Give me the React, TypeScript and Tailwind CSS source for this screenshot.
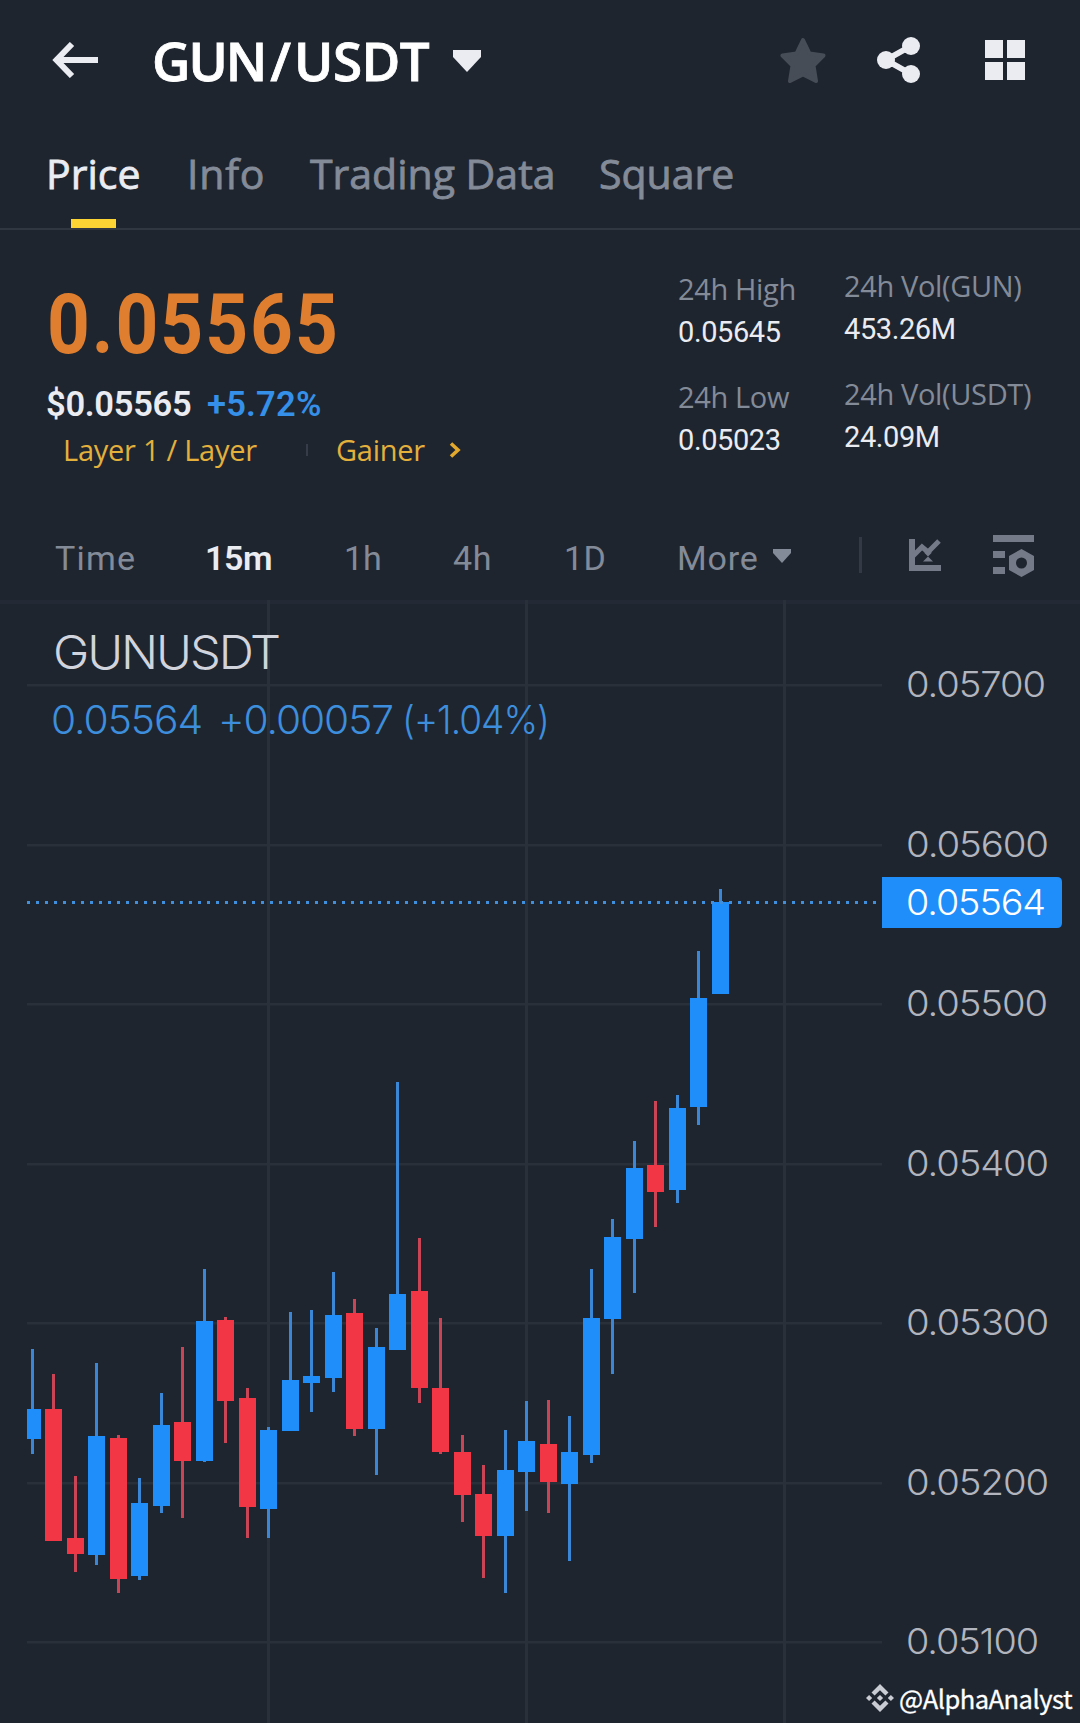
import React from 'react';

type Candle = {
  up: boolean;
  high: number;
  top: number;
  bottom: number;
  low: number;
};

const c = (up: boolean, high: number, top: number, bottom: number, low: number): Candle => ({
  up,
  high,
  top,
  bottom,
  low,
});

const CANDLES: Candle[] = [
  c(true, 1349, 1409, 1439, 1454),
  c(false, 1374, 1409, 1541, 1541),
  c(false, 1476, 1538, 1554, 1572),
  c(true, 1363, 1436, 1555, 1565),
  c(false, 1435, 1438, 1579, 1593),
  c(true, 1478, 1503, 1576, 1580),
  c(true, 1393, 1425, 1506, 1513),
  c(false, 1347, 1422, 1461, 1518),
  c(true, 1269, 1321, 1461, 1462),
  c(false, 1317, 1320, 1401, 1443),
  c(false, 1388, 1398, 1507, 1538),
  c(true, 1427, 1430, 1509, 1538),
  c(true, 1312, 1380, 1431, 1431),
  c(true, 1310, 1376, 1383, 1412),
  c(true, 1272, 1315, 1378, 1392),
  c(false, 1299, 1313, 1429, 1436),
  c(true, 1328, 1347, 1429, 1475),
  c(true, 1082, 1294, 1350, 1350),
  c(false, 1238, 1291, 1388, 1403),
  c(false, 1318, 1388, 1452, 1454),
  c(false, 1435, 1452, 1495, 1522),
  c(false, 1465, 1494, 1536, 1578),
  c(true, 1430, 1470, 1536, 1593),
  c(true, 1401, 1441, 1472, 1511),
  c(false, 1400, 1444, 1482, 1513),
  c(true, 1416, 1452, 1484, 1561),
  c(true, 1269, 1318, 1455, 1463),
  c(true, 1219, 1237, 1319, 1374),
  c(true, 1141, 1168, 1239, 1293),
  c(false, 1101, 1165, 1192, 1227),
  c(true, 1095, 1108, 1190, 1203),
  c(true, 951, 998, 1107, 1125),
  c(true, 889, 902, 994, 994),
];

const LEVELS = [
  { label: '0.05700', y: 684, width: 139 },
  { label: '0.05600', y: 844, width: 142 },
  { label: '0.05500', y: 1003, width: 141 },
  { label: '0.05400', y: 1163, width: 142 },
  { label: '0.05300', y: 1322, width: 142 },
  { label: '0.05200', y: 1482, width: 142 },
  { label: '0.05100', y: 1641, width: 132 },
];

const COLUMNS = [267, 525, 783];

const Header: React.FC = () => (
  <header className="flex h-[120px] items-center pl-[52px] pr-[55px]">
    <svg className="h-9 w-[47px]" viewBox="0 0 47 36" fill="none" stroke="#eaecf2" strokeWidth="6">
      <path d="M46 18H4M20 2L4.5 18L20 34" />
    </svg>
    <h1 className="ml-[53px] w-[301px] whitespace-nowrap font-['Open_Sans',sans-serif] text-[53px] font-semibold leading-none text-white [-webkit-text-stroke:0.8px]">
      <span className="tracking-[-2px]">GUN</span>
      <span className="ml-[5px] mr-[3px]">/</span>
      <span className="tracking-[-0.5px]">USDT</span>
    </h1>
    <svg className="mt-0.5 h-[22px] w-7" viewBox="0 0 28 22" fill="#eaecf2">
      <path d="M0 0H28V7L14 22L0 7Z" />
    </svg>
    <div className="ml-auto flex items-center">
      {/* favourite */}
      <svg className="h-[48px] w-[46px]" viewBox="0 0 46 48" fill="#474d57" stroke="#474d57" strokeWidth="4" strokeLinejoin="round">
        <path d="M23 4L29.5 17.5L43.5 19.5L33.5 29.5L36 45L23 38.5L10 45L12.5 29.5L2.5 19.5L16.5 17.5Z" />
      </svg>
      {/* share */}
      <svg className="ml-[51px] h-[46px] w-[43px]" viewBox="0 0 43 46" fill="#eaecf2">
        <path d="M34 9L9 23L34 37" fill="none" stroke="#eaecf2" strokeWidth="6" />
        <circle cx="34" cy="9" r="9" />
        <circle cx="9" cy="23" r="9" />
        <circle cx="34" cy="37" r="9" />
      </svg>
      {/* layout grid */}
      <div className="ml-[65px] grid h-10 w-10 grid-cols-2 gap-1">
        <span className="bg-[#eaecf2]" />
        <span className="bg-[#eaecf2]" />
        <span className="bg-[#eaecf2]" />
        <span className="bg-[#eaecf2]" />
      </div>
    </div>
  </header>
);

const Tabs: React.FC = () => (
  <nav className="grid h-[110px] grid-cols-[141px_122px_289px_1fr] border-b-2 border-[#303741] pl-[46px] pt-[26px] font-['Open_Sans',sans-serif] text-[41px] leading-[54px] text-[#848b98] [-webkit-text-stroke:0.8px]">
    <div className="text-[#eaecf2]">
      <div>Price</div>
      <div className="ml-[25px] mt-[19px] h-[9px] w-[45px] bg-[#fcd535]" />
    </div>
    <div className="tracking-[0.8px]">Info</div>
    <div className="pl-px">Trading Data</div>
    <div className="pl-px">Square</div>
  </nav>
);

const Stat: React.FC<{ label: string; value: string }> = ({ label, value }) => (
  <div className="whitespace-nowrap leading-9">
    <div className="font-['Open_Sans',sans-serif] text-[29px] tracking-[-0.35px] text-[#848b98]">{label}</div>
    <div className="mt-[7px] font-[Roboto,sans-serif] text-[29px] tracking-[-0.4px] text-[#eaecf2]">{value}</div>
  </div>
);

const Ticker: React.FC = () => (
  <section className="flex h-[286px]">
    <div className="w-[678px] pt-[54px]">
      <div className="ml-[47px] origin-left scale-x-[0.89] font-[Roboto,sans-serif] text-[84px] font-bold leading-[82px] tracking-[2.2px] text-[#de7e2e]">
        0.05565
      </div>
      <div className="mt-[18px] flex pl-[46px] font-[Roboto,sans-serif] text-[34.5px] font-semibold leading-10">
        <span className="w-[161px] tracking-[-0.3px] text-[#eaecf2]">$0.05565</span>
        <span className="tracking-[0.2px] text-[#3490e8]">+5.72%</span>
      </div>
      <div className="mt-1.5 flex items-center pl-[63px] font-['Open_Sans',sans-serif] text-[29px] leading-10 tracking-[-0.25px] text-[#e3b03c]">
        <span className="w-[243px]">Layer 1 / Layer</span>
        <span className="h-3 w-0.5 bg-[#363d49]" />
        <span className="ml-[28px] w-[113px]">Gainer</span>
        <svg className="h-4 w-3" viewBox="0 0 12 16" fill="none" stroke="#e3a92c" strokeWidth="3.6">
          <path d="M2 1.5L9 8L2 14.5" />
        </svg>
      </div>
    </div>
    <div className="w-[166px] space-y-[29px] pt-[41px]">
      <Stat label="24h High" value="0.05645" />
      <Stat label="24h Low" value="0.05023" />
    </div>
    <div className="space-y-[29px] pt-[38px]">
      <Stat label="24h Vol(GUN)" value="453.26M" />
      <Stat label="24h Vol(USDT)" value="24.09M" />
    </div>
  </section>
);

const Intervals: React.FC = () => (
  <section className="flex h-[84px] items-center pl-[55px] font-[Roboto,sans-serif] text-[34px] leading-10 text-[#848b98]">
    <span className="w-[150px] tracking-[1.2px]">Time</span>
    <span className="w-[139px] font-semibold tracking-[-0.4px] text-[#eaecf2]">15m</span>
    <span className="w-[109px]">1h</span>
    <span className="w-[111px] tracking-[0.7px]">4h</span>
    <span className="w-[113px] tracking-[0.5px]">1D</span>
    <span className="w-[96px] tracking-[0.8px]">More</span>
    <svg className="-mt-1 h-[14px] w-[18px]" viewBox="0 0 18 14" fill="#848b98">
      <path d="M0 0H18V4L9 14L0 4Z" />
    </svg>
    <span className="-mt-1.5 ml-[68px] h-9 w-[3px] bg-[#333a45]" />
    <svg className="-mt-1.5 ml-[47px] h-8 w-8" viewBox="0 0 32 32" fill="#747a88">
      <path d="M0 0H6V26H32V32H0Z" />
      <path d="M4 17L13 8L19 13L30 2" fill="none" stroke="#747a88" strokeWidth="5" />
      <path d="M15 13.5H23L19 17.5L24 22.5H14L19 17.5Z" />
    </svg>
    <svg className="-mt-1 ml-[52px] h-[42px] w-[42px]" viewBox="0 0 42 42" fill="#747a88">
      <path d="M0 0H41V7H0ZM0 16H12V23H0ZM0 32H12V39H0Z" />
      <path fillRule="evenodd" d="M28.5 14L41 21V35L28.5 42L16 35V21ZM28.5 22.5A5.5 5.5 0 1 0 28.5 33.5A5.5 5.5 0 1 0 28.5 22.5Z" />
    </svg>
  </section>
);

const Chart: React.FC = () => (
  <section className="relative">
    <svg className="block h-[1123px] w-[1080px] font-[Inter,sans-serif] font-light" viewBox="0 600 1080 1123">
      <rect x={0} y={600} width={1080} height={4} fill="#242a35" />
      {COLUMNS.map((x) => (
        <rect key={x} x={x} y={600} width={3} height={1123} fill="#2a3039" />
      ))}
      {LEVELS.map((level) => (
        <g key={level.label}>
          <rect x={27} y={level.y} width={855} height={2.5} fill="#2a3039" />
          <text x={906} y={level.y + 12.5} fontSize={35} letterSpacing={-1} fill="#b2b5be" textLength={level.width} lengthAdjust="spacingAndGlyphs">
            {level.label}
          </text>
        </g>
      ))}

      {CANDLES.map((candle, i) => {
        const left = Math.floor(24 + i * 21.5);
        const x = Math.max(left, 27);
        return (
          <g key={i}>
            <rect x={left + 7} y={candle.high} width={3} height={candle.low - candle.high} fill={candle.up ? '#3b87d6' : '#c94455'} />
            <rect x={x} y={candle.top} width={left + 17 - x} height={candle.bottom - candle.top} fill={candle.up ? '#1f8efa' : '#f23645'} />
          </g>
        );
      })}

      {/* last price */}
      <path d="M27 902.5H882" stroke="#3f8fdc" strokeWidth="3" strokeDasharray="3 6" />
      <path d="M882 877H1057Q1062 877 1062 882V923Q1062 928 1057 928H882Z" fill="#1f8efa" />
      <text x={906} y={915} fontSize={35} letterSpacing={-1} fill="#ffffff" textLength={139} lengthAdjust="spacingAndGlyphs">
        0.05564
      </text>

      <text x={53} y={669} fontSize={47} letterSpacing={-2} fill="#d1d4dc" textLength={226} lengthAdjust="spacingAndGlyphs">
        GUNUSDT
      </text>
      <g fontSize={39} fill="#3d8edc" letterSpacing={-1}>
        <text x={51} y={733.5} textLength={151} lengthAdjust="spacingAndGlyphs">
          0.05564
        </text>
        <text x={218} y={733.5} textLength={175} lengthAdjust="spacingAndGlyphs">
          +0.00057
        </text>
        <text x={402} y={733.5} textLength={147} lengthAdjust="spacingAndGlyphs">
          (+1.04%)
        </text>
      </g>
    </svg>

    <div className="absolute bottom-[9px] right-2 flex items-center gap-[5px] font-['Noto_Sans_CJK_SC',sans-serif] text-[25.5px] leading-8 tracking-[-0.5px] text-white [-webkit-text-stroke:0.3px]">
      <svg className="h-7 w-7" viewBox="0 0 28 28" fill="#c9ccd3">
        <path d="M14 0L22.5 8.5L19.4 11.6L14 6.2L8.6 11.6L5.5 8.5Z" />
        <path d="M14 28L22.5 19.5L19.4 16.4L14 21.8L8.6 16.4L5.5 19.5Z" />
        <path d="M3.1 10.9L6.2 14L3.1 17.1L0 14ZM24.9 10.9L28 14L24.9 17.1L21.8 14ZM14 10.9L17.1 14L14 17.1L10.9 14Z" />
      </svg>
      @AlphaAnalyst
    </div>
  </section>
);

export default function App() {
  return (
    <main className="h-[1723px] w-[1080px] overflow-hidden bg-[#1f252f]">
      <Header />
      <Tabs />
      <Ticker />
      <Intervals />
      <Chart />
    </main>
  );
}
